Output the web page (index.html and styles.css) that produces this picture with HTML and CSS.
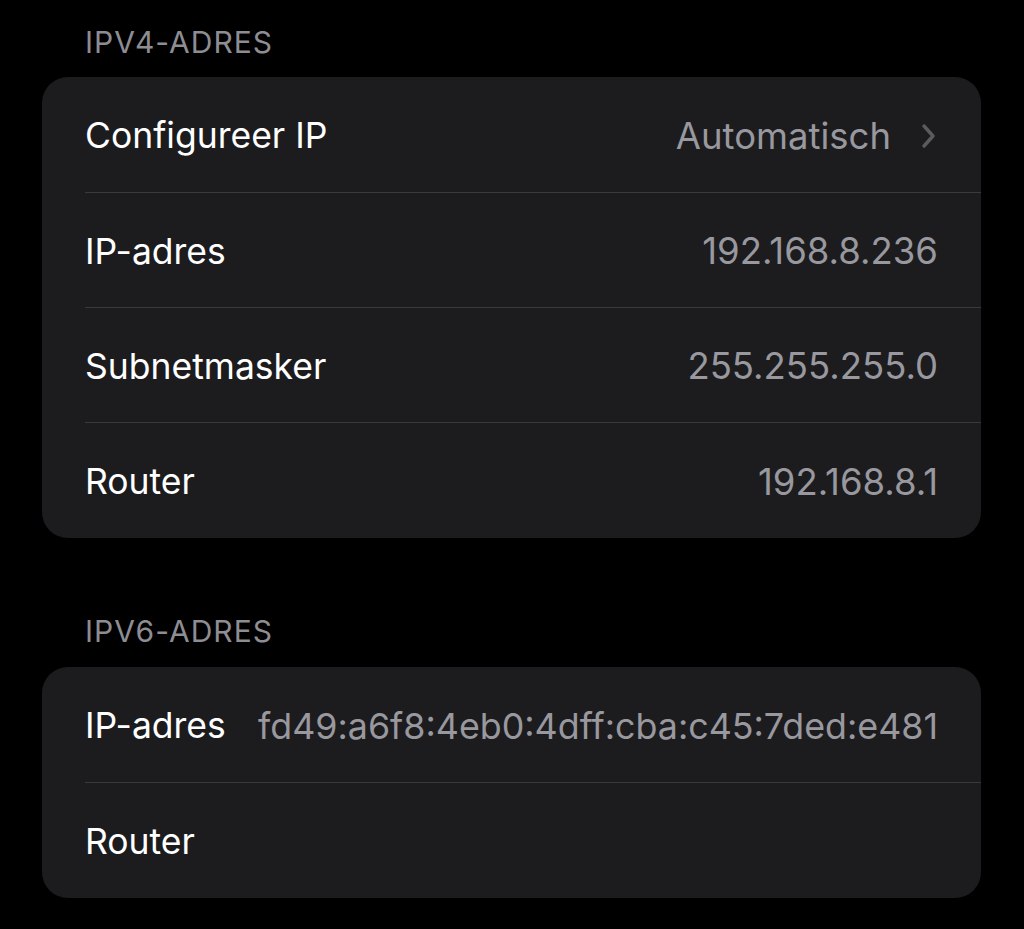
FILE: index.html
```html
<!DOCTYPE html>
<html lang="nl">
<head>
<meta charset="UTF-8">
<meta name="viewport" content="width=device-width, initial-scale=1.0">
<title>IP-instellingen</title>
<link rel="stylesheet" href="styles.css">
</head>
<body>
<h2 class="section-title first">IPV4-ADRES</h2>
<div class="group">
<div class="row">
<span class="label">Configureer IP</span>
<span class="value">Automatisch
<svg class="chevron" width="16" height="26" viewBox="0 0 16 26"><path d="M3 3 L12 13 L3 23" fill="none" stroke="#5a5a5f" stroke-width="3.4" stroke-linecap="round" stroke-linejoin="round"/></svg>
</span>
</div>
<div class="row">
<span class="label">IP-adres</span>
<span class="value">192.168.8.236</span>
</div>
<div class="row">
<span class="label">Subnetmasker</span>
<span class="value">255.255.255.0</span>
</div>
<div class="row">
<span class="label">Router</span>
<span class="value">192.168.8.1</span>
</div>
</div>

<h2 class="section-title">IPV6-ADRES</h2>
<div class="group">
<div class="row">
<span class="label">IP-adres</span>
<span class="value long">fd49:a6f8:4eb0:4dff:cba:c45:7ded:e481</span>
</div>
<div class="row">
<span class="label">Router</span>
<span class="value"></span>
</div>
</div>
</body>
</html>
```

FILE: styles.css
```css
body {
margin: 0;
padding: 0 43px 0 42px;
background-color: #000;
font-family: Inter, "Noto Sans", sans-serif;
color: #fff;
}

.section-title {
margin: 73px 0 16px 43px;
height: 40px;
line-height: 40px;
font-size: 30px;
font-weight: 400;
letter-spacing: 1px;
color: #8d8d93;
}

.section-title.first {
margin-top: 22px;
margin-bottom: 15px;
}

.group {
background-color: #1c1c1e;
border-radius: 26px;
overflow: hidden;
}

.row {
display: flex;
justify-content: space-between;
align-items: center;
gap: 24px;
height: 112px;
padding-top: 2px;
margin-left: 43px;
padding-right: 43px;
border-top: 1px solid #3a3a3c;
}

.row:first-child {
border-top: none;
height: 113px;
}

.row:last-child {
height: 113px;
}

.label {
font-size: 35.5px;
white-space: nowrap;
}

.value {
display: flex;
align-items: center;
gap: 30px;
font-size: 36.5px;
color: #98989e;
white-space: nowrap;
}

.value.long {
font-size: 35.8px;
}

.chevron {
display: block;
margin-right: 1px;
}
```
